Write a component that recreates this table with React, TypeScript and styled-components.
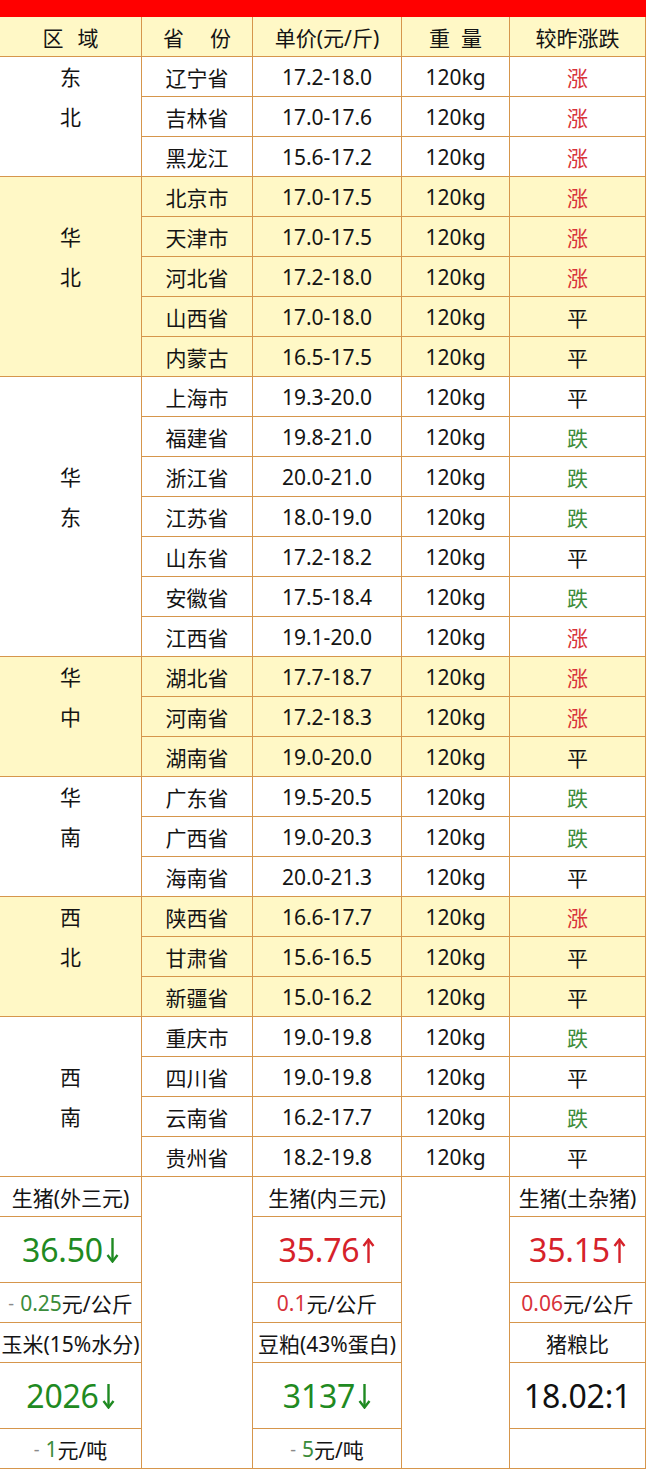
import React from "react";
import styled, { createGlobalStyle } from "styled-components";

const Global = createGlobalStyle`
  html, body { margin: 0; padding: 0; background: #fff; }
  * { box-sizing: border-box; }
`;

const YELLOW = "#fff8c6";
const LINE = "#d6964c";
const RED = "#d8323a";
const GREEN = "#3b8c3b";
const BIG_RED = "#d6222a";
const BIG_GREEN = "#1f8a22";

const Page = styled.div`
  width: 646px;
  font-family: "Noto Sans", "Noto Sans CJK SC", sans-serif;
  color: #141414;
`;

const RedBand = styled.div`
  height: 17px;
  background: #ff0000;
`;

const Table = styled.div`
  display: grid;
  grid-template-columns: 142px 111px 149px 108px 136px;
  grid-template-rows: repeat(29, 40px) 40px 66px 40px 40px 66px 40px;
`;

const Cell = styled.div<{ $row: number; $col: number; $span?: number; $bg?: string }>`
  grid-row: ${(p) => `${p.$row} / span ${p.$span ?? 1}`};
  grid-column: ${(p) => p.$col};
  background: ${(p) => p.$bg ?? "#fff"};
  border-right: 1px solid ${LINE};
  border-bottom: 1px solid ${LINE};
  display: flex;
  align-items: center;
  justify-content: center;
  font-size: 21px;
  white-space: nowrap;
  overflow: visible;
`;

const RegionCell = styled(Cell)<{ $trail?: boolean }>`
  flex-direction: column;
  line-height: 40px;
  padding-bottom: ${(p) => (p.$trail ? "40px" : "0")};
`;

const Spacer = styled.span<{ $w: number }>`
  display: inline-block;
  width: ${(p) => p.$w}px;
`;

const Trend = styled.span<{ $c: string }>`
  color: ${(p) => p.$c};
`;

const Big = styled.span<{ $c: string }>`
  font-size: 32px;
  color: ${(p) => p.$c};
  letter-spacing: -0.2px;
  display: inline-flex;
  align-items: center;
`;

const ArrowSvg = styled.svg`
  width: 13px;
  height: 25px;
  margin-left: 3px;
  margin-top: 2px;
  flex: none;
`;

const Arrow = ({ up }: { up?: boolean }) => (
  <ArrowSvg viewBox="0 0 13 25" fill="none" stroke="currentColor" strokeWidth={2.4} strokeLinecap="butt">
    {up ? (
      <>
        <line x1="6.5" y1="2" x2="6.5" y2="25" />
        <polyline points="1.5,8 6.5,1.5 11.5,8" />
      </>
    ) : (
      <>
        <line x1="6.5" y1="0" x2="6.5" y2="23" />
        <polyline points="1.5,17 6.5,23.5 11.5,17" />
      </>
    )}
  </ArrowSvg>
);

const Dash = styled.span`
  color: #8a8a8a;
  font-size: 18px;
  margin-right: 6px;
`;

const Num = styled.span<{ $c: string }>`
  color: ${(p) => p.$c};
`;

type Row = [string, string, string];
type Region = { name: [string, string]; trail: boolean; yellow: boolean; rows: Row[] };

const regions: Region[] = [
  { name: ["东", "北"], trail: true, yellow: false, rows: [["辽宁省", "17.2-18.0", "涨"], ["吉林省", "17.0-17.6", "涨"], ["黑龙江", "15.6-17.2", "涨"]] },
  { name: ["华", "北"], trail: true, yellow: true, rows: [["北京市", "17.0-17.5", "涨"], ["天津市", "17.0-17.5", "涨"], ["河北省", "17.2-18.0", "涨"], ["山西省", "17.0-18.0", "平"], ["内蒙古", "16.5-17.5", "平"]] },
  { name: ["华", "东"], trail: true, yellow: false, rows: [["上海市", "19.3-20.0", "平"], ["福建省", "19.8-21.0", "跌"], ["浙江省", "20.0-21.0", "跌"], ["江苏省", "18.0-19.0", "跌"], ["山东省", "17.2-18.2", "平"], ["安徽省", "17.5-18.4", "跌"], ["江西省", "19.1-20.0", "涨"]] },
  { name: ["华", "中"], trail: true, yellow: true, rows: [["湖北省", "17.7-18.7", "涨"], ["河南省", "17.2-18.3", "涨"], ["湖南省", "19.0-20.0", "平"]] },
  { name: ["华", "南"], trail: true, yellow: false, rows: [["广东省", "19.5-20.5", "跌"], ["广西省", "19.0-20.3", "跌"], ["海南省", "20.0-21.3", "平"]] },
  { name: ["西", "北"], trail: true, yellow: true, rows: [["陕西省", "16.6-17.7", "涨"], ["甘肃省", "15.6-16.5", "平"], ["新疆省", "15.0-16.2", "平"]] },
  { name: ["西", "南"], trail: false, yellow: false, rows: [["重庆市", "19.0-19.8", "跌"], ["四川省", "19.0-19.8", "平"], ["云南省", "16.2-17.7", "跌"], ["贵州省", "18.2-19.8", "平"]] },
];

const trendColor = (t: string) => (t === "涨" ? RED : t === "跌" ? GREEN : "#141414");

export default function App() {
  const body: React.ReactNode[] = [];
  let row = 2;
  regions.forEach((r, ri) => {
    const bg = r.yellow ? YELLOW : "#fff";
    body.push(
      <RegionCell key={`r${ri}`} $row={row} $col={1} $span={r.rows.length} $bg={bg} $trail={r.trail}>
        <span>{r.name[0]}</span>
        <span>{r.name[1]}</span>
      </RegionCell>
    );
    r.rows.forEach((d, i) => {
      const rr = row + i;
      body.push(
        <Cell key={`p${rr}`} $row={rr} $col={2} $bg={bg}>{d[0]}</Cell>,
        <Cell key={`v${rr}`} $row={rr} $col={3} $bg={bg}>{d[1]}</Cell>,
        <Cell key={`w${rr}`} $row={rr} $col={4} $bg={bg}>120kg</Cell>,
        <Cell key={`t${rr}`} $row={rr} $col={5} $bg={bg}>
          <Trend $c={trendColor(d[2])}>{d[2]}</Trend>
        </Cell>
      );
    });
    row += r.rows.length;
  });

  const b = 30;

  return (
    <Page>
      <Global />
      <RedBand />
      <Table>
        <Cell $row={1} $col={1} $bg={YELLOW}>区<Spacer $w={14} />域</Cell>
        <Cell $row={1} $col={2} $bg={YELLOW}>省<Spacer $w={26} />份</Cell>
        <Cell $row={1} $col={3} $bg={YELLOW}>单价(元/斤)</Cell>
        <Cell $row={1} $col={4} $bg={YELLOW}>重<Spacer $w={11} />量</Cell>
        <Cell $row={1} $col={5} $bg={YELLOW}>较昨涨跌</Cell>
        {body}

        <Cell $row={b} $col={1}>生猪(外三元)</Cell>
        <Cell $row={b + 1} $col={1}><Big $c={BIG_GREEN}>36.50<Arrow /></Big></Cell>
        <Cell $row={b + 2} $col={1}><Dash>-</Dash><Num $c={GREEN}>0.25</Num>元/公斤</Cell>
        <Cell $row={b + 3} $col={1}>玉米(15%水分)</Cell>
        <Cell $row={b + 4} $col={1}><Big $c={BIG_GREEN}>2026<Arrow /></Big></Cell>
        <Cell $row={b + 5} $col={1}><Dash>-</Dash><Num $c={GREEN}>1</Num>元/吨</Cell>

        <Cell $row={b} $col={2} $span={6} />

        <Cell $row={b} $col={3}>生猪(内三元)</Cell>
        <Cell $row={b + 1} $col={3}><Big $c={BIG_RED}>35.76<Arrow up /></Big></Cell>
        <Cell $row={b + 2} $col={3}><Num $c={RED}>0.1</Num>元/公斤</Cell>
        <Cell $row={b + 3} $col={3}>豆粕(43%蛋白)</Cell>
        <Cell $row={b + 4} $col={3}><Big $c={BIG_GREEN}>3137<Arrow /></Big></Cell>
        <Cell $row={b + 5} $col={3}><Dash>-</Dash><Num $c={GREEN}>5</Num>元/吨</Cell>

        <Cell $row={b} $col={4} $span={6} />

        <Cell $row={b} $col={5}>生猪(土杂猪)</Cell>
        <Cell $row={b + 1} $col={5}><Big $c={BIG_RED}>35.15<Arrow up /></Big></Cell>
        <Cell $row={b + 2} $col={5}><Num $c={RED}>0.06</Num>元/公斤</Cell>
        <Cell $row={b + 3} $col={5}>猪粮比</Cell>
        <Cell $row={b + 4} $col={5}><Big $c="#111">18.02:1</Big></Cell>
        <Cell $row={b + 5} $col={5} />
      </Table>
    </Page>
  );
}
